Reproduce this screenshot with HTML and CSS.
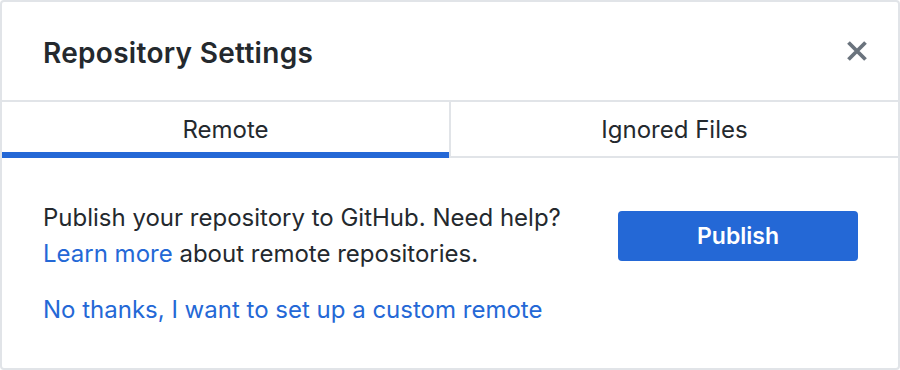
FILE: index.html
```html
<!DOCTYPE html>
<html lang="en">
<head>
  <meta charset="UTF-8" />
  <title>Repository Settings</title>
  <link rel="stylesheet" href="styles.css">
</head>
<body>
  <div class="dialog">
    <div class="header">
      <h1>Repository Settings</h1>
      <button class="close" aria-label="Close">
        <svg width="22" height="22" viewBox="0 0 22 22">
          <path d="M2.5 2.5 L19.5 19.5 M19.5 2.5 L2.5 19.5" stroke="#6a737d" stroke-width="3.8" fill="none" />
        </svg>
      </button>
    </div>

    <div class="tabs">
      <div class="tab active">Remote</div>
      <div class="tab">Ignored Files</div>
    </div>

    <div class="content">
      <div class="publish-row">
        <p class="intro">
          Publish your repository to GitHub. Need help?<br>
          <a href="#">Learn more</a> about remote repositories.
        </p>
        <button class="publish">Publish</button>
      </div>
      <a href="#" class="custom">No thanks, I want to set up a custom remote</a>
    </div>
  </div>
</body>
</html>
```

FILE: styles.css
```css
* {
  box-sizing: border-box;
}

body {
  margin: 0;
  padding: 0;
  font-family: Inter, "Liberation Sans", sans-serif;
  color: #24292e;
  background: #ffffff;
}

.dialog {
  height: 370px;
  border: 2px solid #e1e4e8;
  border-radius: 4px;
  display: flex;
  flex-direction: column;
}

.header {
  height: 100px;
  display: flex;
  align-items: center;
  justify-content: space-between;
  padding: 3px 30px 0 41px;
  border-bottom: 2px solid #e1e4e8;
}

h1 {
  margin: 0;
  font-size: 28px;
  font-weight: 600;
  letter-spacing: 0.3px;
}

.close {
  border: none;
  background: none;
  padding: 0;
  width: 22px;
  height: 22px;
  margin-top: -3px;
  cursor: pointer;
}

.close svg {
  display: block;
}

.tabs {
  display: flex;
  height: 56px;
}

.tab {
  flex: 1;
  display: flex;
  align-items: center;
  justify-content: center;
  font-size: 24px;
  border-bottom: 2px solid #e1e4e8;
}

.tab + .tab {
  border-left: 2px solid #e1e4e8;
}

.tab.active {
  border-bottom-color: #2468d6;
  box-shadow: inset 0 -4px 0 #2468d6;
}

.content {
  padding: 42px 40px 0 41px;
}

.publish-row {
  display: flex;
  align-items: center;
  justify-content: space-between;
}

.intro {
  margin: 0;
  font-size: 24px;
  line-height: 36px;
}

a {
  color: #2468d6;
  text-decoration: none;
}

.publish {
  width: 240px;
  height: 50px;
  border: none;
  border-radius: 4px;
  background: #2468d6;
  color: #ffffff;
  font-family: inherit;
  font-size: 23px;
  font-weight: 600;
  cursor: pointer;
}

.custom {
  display: block;
  margin-top: 20px;
  font-size: 24px;
  line-height: 36px;
}
```
